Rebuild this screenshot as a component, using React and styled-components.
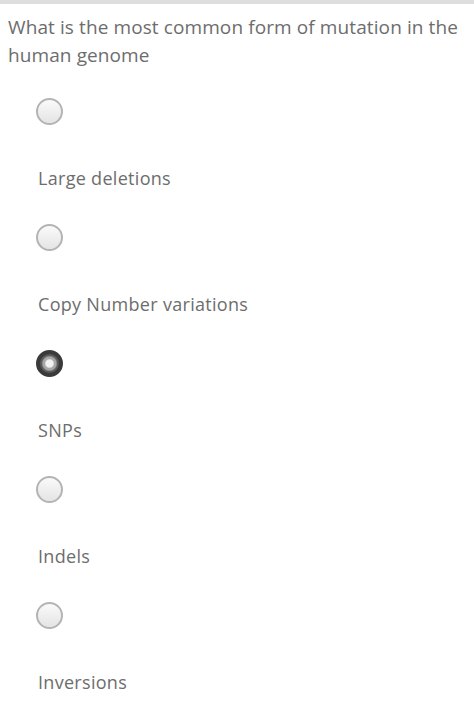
import React from 'react'
import styled, { createGlobalStyle } from 'styled-components'

const GlobalStyle = createGlobalStyle`
  html, body {
    margin: 0;
    padding: 0;
    background: #ffffff;
  }
`

const Page = styled.div`
  width: 474px;
  height: 718px;
  display: flex;
  flex-direction: column;
  font-family: "Open Sans", "Noto Sans", sans-serif;
  color: #6d6d6d;
  background: #ffffff;
  overflow: hidden;
`

const EdgeBar = styled.div`
  height: ${props => props.h}px;
  background: #dedede;
  flex-shrink: 0;
`

const Card = styled.div`
  flex: 1;
  padding: 9px 6px 0 8px;
  display: flex;
  flex-direction: column;
`

const Question = styled.p`
  margin: 0;
  font-size: 19px;
  line-height: 28px;
  letter-spacing: 0.1px;
`

const Options = styled.div`
  display: flex;
  flex-direction: column;
  padding: 29px 0 0 28px;
`

const Option = styled.label`
  display: flex;
  flex-direction: column;
  align-items: flex-start;
  height: 126px;
`

const Radio = styled.span`
  width: 27px;
  height: 27px;
  box-sizing: border-box;
  border-radius: 50%;
  border: ${props => props.checked ? '4px solid #3a3a3a' : '2px solid #b4b4b4'};
  background: ${props => props.checked
    ? 'radial-gradient(circle, #f2f2f2 0 3.5px, #a8a8a8 5px 6.5px, #5c5c5c 8px)'
    : 'linear-gradient(#fafafa, #e4e4e4)'};
`

const OptionText = styled.span`
  margin-top: 41px;
  margin-left: 2px;
  font-size: 18px;
  line-height: 24px;
  letter-spacing: 0.3px;
`

const options = [
  { text: 'Large deletions', checked: false },
  { text: 'Copy Number variations', checked: false },
  { text: 'SNPs', checked: true },
  { text: 'Indels', checked: false },
  { text: 'Inversions', checked: false },
]

function App() {
  return (
    <Page>
      <GlobalStyle />
      <EdgeBar h={4} />
      <Card>
        <Question>What is the most common form of mutation in the human genome</Question>
        <Options>
          {options.map(o => (
            <Option key={o.text}>
              <Radio checked={o.checked} />
              <OptionText>{o.text}</OptionText>
            </Option>
          ))}
        </Options>
      </Card>
      <EdgeBar h={6} />
    </Page>
  )
}

export default App
